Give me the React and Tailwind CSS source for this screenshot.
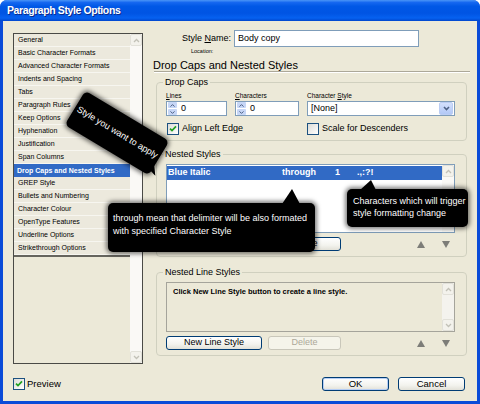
import React from 'react';

const categories = [
  'General',
  'Basic Character Formats',
  'Advanced Character Formats',
  'Indents and Spacing',
  'Tabs',
  'Paragraph Rules',
  'Keep Options',
  'Hyphenation',
  'Justification',
  'Span Columns',
  'Drop Caps and Nested Styles',
  'GREP Style',
  'Bullets and Numbering',
  'Character Colour',
  'OpenType Features',
  'Underline Options',
  'Strikethrough Options',
];

function ScrollArrow({ down }) {
  return (
    <div className="w-[12px] h-[12px] rounded-[2px] bg-[#F3F2EC] border border-[#E2E1D9] flex items-center justify-center shrink-0">
      <svg width="7" height="5" viewBox="0 0 7 5">
        <path
          d={down ? 'M1 1 L3.5 3.5 L6 1' : 'M1 4 L3.5 1.5 L6 4'}
          stroke="#C2C1B7"
          strokeWidth="1.3"
          fill="none"
        />
      </svg>
    </div>
  );
}

function Check({ checked }) {
  return (
    <span className="w-[12px] h-[12px] border border-[#1C5180] bg-[linear-gradient(135deg,#DCDCD7,#FFFFFF)] flex items-center justify-center shrink-0">
      {checked && (
        <svg width="8" height="8" viewBox="0 0 8 8">
          <path d="M1 3.6 L3 5.6 L7 1.4" stroke="#21A121" strokeWidth="1.7" fill="none" />
        </svg>
      )}
    </span>
  );
}

function MoveArrows() {
  return (
    <div className="ml-auto mr-[5px] flex items-center gap-[17px]">
      <svg width="8" height="7" viewBox="0 0 8 7">
        <path d="M4 0 L8 7 L0 7 Z" fill="#7D7D78" />
      </svg>
      <svg width="8" height="7" viewBox="0 0 8 7">
        <path d="M0 0 L8 0 L4 7 Z" fill="#7D7D78" />
      </svg>
    </div>
  );
}

function Spinner() {
  return (
    <div className="w-full h-[15px] border border-[#7F9DB9] bg-white flex items-center">
      <div className="w-[9px] h-[13px] ml-[1px] flex flex-col gap-[1px]">
        <div className="flex-1 rounded-[1px] bg-[#C6D6F6] flex items-center justify-center">
          <svg width="5" height="3" viewBox="0 0 5 3">
            <path d="M0.5 2.6 L2.5 0.6 L4.5 2.6" stroke="#4D6185" strokeWidth="1" fill="none" />
          </svg>
        </div>
        <div className="flex-1 rounded-[1px] bg-[#C6D6F6] flex items-center justify-center">
          <svg width="5" height="3" viewBox="0 0 5 3">
            <path d="M0.5 0.4 L2.5 2.4 L4.5 0.4" stroke="#4D6185" strokeWidth="1" fill="none" />
          </svg>
        </div>
      </div>
      <span className="ml-[4px] text-[9px] leading-none">0</span>
    </div>
  );
}

export default function App() {
  return (
    <div className="w-[480px] h-[404px] bg-white font-['Liberation_Sans',Arial,sans-serif] text-black">
      <div className="w-full h-full rounded-t-[7px] bg-[#0A4BD8] flex flex-col overflow-hidden">
        {/* title bar */}
        <div className="h-[21px] shrink-0 bg-[linear-gradient(to_bottom,#4A95F7_0%,#1567F0_12%,#0058E6_30%,#0054E3_62%,#0661F0_86%,#0046CD_100%)] flex items-center pl-[7px]">
          <span className="text-white font-bold text-[10.5px] tracking-[-0.4px] [text-shadow:1px_1px_0_#0A2A8A]">
            Paragraph Style Options
          </span>
        </div>

        {/* body */}
        <div className="relative flex-1 mx-[3px] mb-[3px] bg-[#ECE9D8] flex flex-col">
          <div className="flex items-start pt-[9px] pl-[10px]">
            {/* category list */}
            <div className="mt-[3px] w-[130px] h-[331px] border border-[#4A4A46] bg-[#ECE9D8] flex">
              <div className="flex-1">
                <div className="border-b-[2px] border-[#66655E]">
                  {categories.map((c) => {
                    const sel = c === 'Drop Caps and Nested Styles';
                    return (
                      <div
                        key={c}
                        className={
                          sel
                            ? 'h-[13px] leading-[13px] pl-[3px] text-[7px] font-bold text-white bg-[#316AC5]'
                            : 'h-[13px] leading-[12px] pl-[4px] text-[7px] bg-[#ECE9DD] border-b border-[#F7F6F0]'
                        }
                      >
                        {c}
                      </div>
                    );
                  })}
                </div>
              </div>
              <div className="w-[12px] bg-[#FAF9F6] flex flex-col justify-between">
                <ScrollArrow />
                <ScrollArrow down />
              </div>
            </div>

            {/* right panel */}
            <div className="ml-[11px] w-[316px] flex flex-col">
              <div className="flex items-center h-[17px]">
                <div className="w-[77px] text-right text-[9px]">
                  Style <span className="underline">N</span>ame:
                </div>
                <div className="ml-[3px] w-[185px] h-[17px] border border-[#7F9DB9] bg-white flex items-center pl-[3px] text-[9px]">
                  Body copy
                </div>
              </div>
              <div className="h-[8px] pl-[37px] text-[5.5px] leading-[8px]">Location:</div>
              <div className="mt-[4px] h-[12px] text-[11px] leading-[12px] -ml-[1px]">Drop Caps and Nested Styles</div>
              <div className="h-px bg-[#ACA899] shadow-[0_1px_0_#FFFFFF]" />

              {/* Drop Caps */}
              <fieldset className="mt-[5px] ml-[2px] w-[311px] border border-[#D0D0BF] rounded-[4px] pl-[9px] pr-[11px] pb-[5px]">
                <legend className="-ml-[3px] px-[2px] text-[9px] leading-[10px]">Drop Caps</legend>
                <div className="mt-[5px] flex h-[8px] text-[6.5px] leading-[8px]">
                  <div className="w-[61px]">
                    <span className="underline">L</span>ines
                  </div>
                  <div className="ml-[8px] w-[64px]">
                    <span className="underline">C</span>haracters
                  </div>
                  <div className="ml-[8px]">
                    Character <span className="underline">S</span>tyle
                  </div>
                </div>
                <div className="mt-[1px] flex">
                  <div className="w-[61px]">
                    <Spinner />
                  </div>
                  <div className="ml-[8px] w-[64px]">
                    <Spinner />
                  </div>
                  <div className="ml-[8px] flex-1 h-[15px] border border-[#7F9DB9] bg-white flex items-center">
                    <span className="ml-[3px] text-[9px]">[None]</span>
                    <div className="ml-auto mr-[1px] w-[14px] h-[13px] rounded-[2px] bg-[linear-gradient(to_bottom,#D3E0FC,#B2C8F6)] border border-[#BBCDF3] flex items-center justify-center">
                      <svg width="7" height="5" viewBox="0 0 7 5">
                        <path d="M1 1 L3.5 3.6 L6 1" stroke="#4D6185" strokeWidth="1.5" fill="none" />
                      </svg>
                    </div>
                  </div>
                </div>
                <div className="mt-[7px] flex h-[12px] items-center text-[9px]">
                  <div className="w-[141px] flex items-center gap-[3px] pl-[1px]">
                    <Check checked />
                    <span>Align Left Edge</span>
                  </div>
                  <div className="flex items-center gap-[3px]">
                    <Check />
                    <span>Scale for Descenders</span>
                  </div>
                </div>
              </fieldset>

              {/* Nested Styles */}
              <fieldset className="mt-[8px] ml-[2px] w-[311px] border border-[#D0D0BF] rounded-[4px] pl-[9px] pr-[11px] pb-[5px]">
                <legend className="-ml-[3px] px-[2px] text-[9px] leading-[10px]">Nested Styles</legend>
                <div className="mt-[5px] h-[69px] border border-[#7F9DB9] bg-white flex">
                  <div className="flex-1 pt-[1px]">
                    <div className="h-[14px] bg-[#316AC5] text-white font-bold text-[9px] flex items-center pl-[1px]">
                      <span className="w-[114px]">Blue Italic</span>
                      <span className="w-[53px]">through</span>
                      <span className="w-[22px]">1</span>
                      <span>.,:?!</span>
                    </div>
                  </div>
                  <div className="w-[12px] bg-[#FAF9F6]">
                    <ScrollArrow />
                  </div>
                </div>
                <div className="mt-[4px] h-[14px] flex items-center">
                  <div className="w-[96px] h-[14px] border border-[#003C74] rounded-[3px] bg-[linear-gradient(to_bottom,#FFFFFF,#F3F3EE_60%,#E2E1D8)] text-[9px] flex items-center justify-center">
                    New Nested Style
                  </div>
                  <div className="ml-[6px] w-[73px] h-[14px] border border-[#003C74] rounded-[3px] bg-[linear-gradient(to_bottom,#FFFFFF,#F3F3EE_60%,#E2E1D8)] text-[9px] flex items-center justify-center">
                    Delete
                  </div>
                  <MoveArrows />
                </div>
              </fieldset>

              {/* Nested Line Styles */}
              <fieldset className="mt-[10px] ml-[2px] w-[311px] border border-[#D0D0BF] rounded-[4px] pl-[9px] pr-[11px] pb-[5px]">
                <legend className="-ml-[3px] px-[2px] text-[9px] leading-[10px]">Nested Line Styles</legend>
                <div className="mt-[5px] h-[50px] border border-[#A5A49B] bg-[#ECE9D8] flex">
                  <div className="flex-1 pl-[6px] pt-[5px] text-[7.5px] leading-[8px] font-bold">
                    Click New Line Style button to create a line style.
                  </div>
                  <div className="w-[12px] bg-[#F4F3EE] flex flex-col justify-between">
                    <ScrollArrow />
                    <ScrollArrow down />
                  </div>
                </div>
                <div className="mt-[4px] h-[14px] flex items-center">
                  <div className="w-[96px] h-[14px] border border-[#003C74] rounded-[3px] bg-[linear-gradient(to_bottom,#FFFFFF,#F3F3EE_60%,#E2E1D8)] text-[9px] flex items-center justify-center">
                    New Line Style
                  </div>
                  <div className="ml-[6px] w-[73px] h-[14px] border border-[#C9C7BA] rounded-[3px] bg-[#F5F4EA] text-[9px] text-[#ACA899] flex items-center justify-center">
                    Delete
                  </div>
                  <MoveArrows />
                </div>
              </fieldset>
            </div>
          </div>

          {/* bottom row */}
          <div className="mt-[13px] h-[14px] pl-[10px] pr-[12px] flex items-center">
            <div className="flex items-center gap-[2px] text-[9.5px]">
              <Check checked />
              <span>Preview</span>
            </div>
            <div className="ml-auto flex gap-[9px]">
              <div className="w-[67px] h-[14px] border border-[#003C74] rounded-[3px] bg-[linear-gradient(to_bottom,#FFFFFF,#F3F3EE_60%,#E2E1D8)] shadow-[inset_0_0_0_1px_#B5CDF4] text-[9.5px] flex items-center justify-center">
                OK
              </div>
              <div className="w-[67px] h-[14px] border border-[#003C74] rounded-[3px] bg-[linear-gradient(to_bottom,#FFFFFF,#F3F3EE_60%,#E2E1D8)] text-[9.5px] flex items-center justify-center">
                Cancel
              </div>
            </div>
          </div>

          {/* callouts */}
          <div className="absolute left-[65px] top-[92px] w-[98px] h-[40px] rotate-[31deg] bg-black rounded-[5px] shadow-[0_0_4px_2px_rgba(0,0,0,0.55)] flex items-center justify-center">
            <span className="text-white text-[9px] whitespace-nowrap">Style you want to apply</span>
            <svg className="absolute right-[-6px] bottom-[3px]" width="7" height="9" viewBox="0 0 7 9">
              <path d="M0 0 L7 9 L0 7 Z" fill="#000" />
            </svg>
          </div>

          <div className="absolute left-[105px] top-[182px] w-[207px] h-[49px] bg-black rounded-[5px] shadow-[0_0_4px_2px_rgba(0,0,0,0.5)] pl-[5px] pt-[9px] text-white text-[9px] leading-[13px]">
            <svg className="absolute left-[174px] top-[-14px]" width="18" height="15" viewBox="0 0 18 15">
              <path d="M0 15 L10 0 L18 15 Z" fill="#000" />
            </svg>
            through mean that delimiter will be also formated
            <br />
            with specified Character Style
          </div>

          <div className="absolute left-[344px] top-[168px] w-[121px] h-[38px] bg-black rounded-[5px] shadow-[0_0_4px_2px_rgba(0,0,0,0.5)] pl-[6px] pt-[6px] text-white text-[9px] leading-[12px]">
            <svg className="absolute left-[13px] top-[-9px]" width="16" height="10" viewBox="0 0 16 10">
              <path d="M0 10 L11 0 L16 10 Z" fill="#000" />
            </svg>
            Characters which will trigger
            <br />
            style formatting change
          </div>
        </div>
      </div>
    </div>
  );
}
